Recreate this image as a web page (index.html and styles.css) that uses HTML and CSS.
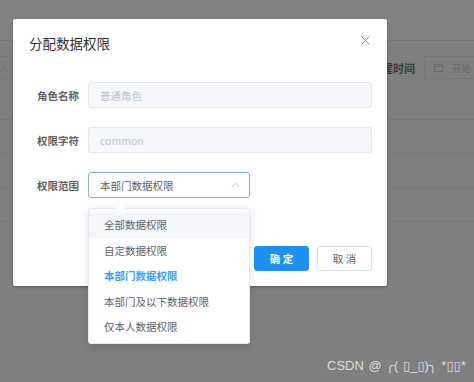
FILE: index.html
```html
<!DOCTYPE html>
<html lang="zh">
<head>
<meta charset="utf-8">
<title>分配数据权限</title>
<link rel="stylesheet" href="styles.css">
</head>
<body>
<div class="page">
  <div class="topbar"></div>
  <div class="filters">
    <div class="bg-input"><span>入</span></div>
    <div class="bg-label">创建时间</div>
    <div class="bg-date">
      <svg width="9" height="9" viewBox="0 0 9 9"><rect x="0.5" y="1.5" width="8" height="7" fill="none" stroke="#6a6a6a"/><line x1="0.5" y1="3.5" x2="8.5" y2="3.5" stroke="#6a6a6a"/></svg>
      <span>开始</span>
    </div>
  </div>
  <div class="rows">
    <div class="row-line"></div>
    <div class="row-line"></div>
    <div class="row-line"></div>
    <div class="row-line"></div>
  </div>
  <div class="watermark">CSDN @ ╭( ▯_▯)╮ *▯▯*</div>
</div>

<div class="dialog">
  <div class="dialog-header">
    <span class="dialog-title">分配数据权限</span>
    <svg class="close" width="9" height="9" viewBox="0 0 9 9"><path d="M0.5 0.5 L8.5 8.5 M8.5 0.5 L0.5 8.5" stroke="#909399" stroke-width="1" fill="none"/></svg>
  </div>
  <div class="dialog-body">
    <div class="form-row">
      <label class="form-label">角色名称</label>
      <div class="input disabled"><span class="placeholder">普通角色</span></div>
    </div>
    <div class="form-row">
      <label class="form-label">权限字符</label>
      <div class="input disabled"><span class="placeholder">common</span></div>
    </div>
    <div class="form-row">
      <label class="form-label">权限范围</label>
      <div class="input select focus">
        <span class="value">本部门数据权限</span>
        <svg class="arrow" width="9" height="6" viewBox="0 0 9 6"><polyline points="0.8,5 4.5,1.3 8.2,5" fill="none" stroke="#c0c4cc" stroke-width="1"/></svg>
      </div>
    </div>
  </div>
  <div class="dialog-footer">
    <button class="btn primary">确 定</button>
    <button class="btn">取 消</button>
  </div>
</div>

<div class="dropdown">
  <div class="popper-arrow"></div>
  <ul class="options">
    <li class="hover">全部数据权限</li>
    <li>自定数据权限</li>
    <li class="selected">本部门数据权限</li>
    <li>本部门及以下数据权限</li>
    <li>仅本人数据权限</li>
  </ul>
</div>
</body>
</html>
```

FILE: styles.css
```css
* { box-sizing: border-box; }
html, body {
  margin: 0;
  padding: 0;
}
body {
  width: 474px;
  height: 382px;
  overflow: hidden;
  background: #7f7f7f;
  font-family: "Noto Sans CJK SC", "Noto Sans", sans-serif;
  position: relative;
}
.page {
  width: 474px;
  height: 382px;
  overflow: hidden;
  position: relative;
  display: flex;
  flex-direction: column;
}
.topbar {
  height: 41px;
  flex-shrink: 0;
  background: #828282;
  border-bottom: 1px solid #767676;
}
.filters {
  display: flex;
  align-items: center;
  margin-top: 15px;
  height: 23px;
  flex-shrink: 0;
}
.bg-input {
  flex-shrink: 0;
  margin-left: -50px;
  width: 63px;
  height: 23px;
  border: 1px solid #777;
  display: flex;
  align-items: center;
  justify-content: flex-end;
  font-size: 9px;
  color: #6f6f6f;
  padding-right: 4px;
  overflow: hidden;
}
.bg-label {
  flex-shrink: 0;
  margin-left: 358px;
  width: 44px;
  font-size: 11px;
  font-weight: bold;
  color: #3a3a3a;
  text-align: right;
  white-space: nowrap;
}
.bg-date {
  flex-shrink: 0;
  margin-left: 9px;
  width: 70px;
  height: 23px;
  border: 1px solid #777;
  border-radius: 2px;
  display: flex;
  align-items: center;
  gap: 9px;
  padding-left: 9px;
  font-size: 9.5px;
  color: #6c6c6c;
  white-space: nowrap;
}
.rows {
  display: flex;
  flex-direction: column;
  margin-top: 40px;
}
.row-line {
  height: 34px;
  border-bottom: 1px solid #777;
}
.row-line:first-child { height: 1px; }
.watermark {
  position: absolute;
  left: 327px;
  top: 358px;
  font-family: "Liberation Sans", "DejaVu Sans", sans-serif;
  font-size: 13px;
  color: #dcdcdc;
  white-space: nowrap;
  word-spacing: 1px;
}

/* dialog */
.dialog {
  position: absolute;
  left: 13px;
  top: 19px;
  width: 374px;
  height: 267px;
  background: #fff;
  border-radius: 2px;
  box-shadow: 0 1px 3px rgba(0,0,0,0.3);
  display: flex;
  flex-direction: column;
}
.dialog-header {
  display: flex;
  align-items: center;
  justify-content: space-between;
  padding: 12px 17px 0 16px;
  height: 35px;
}
.dialog-title {
  font-size: 13.5px;
  color: #303133;
  line-height: 20px;
}
.close { display: block; margin-top: -4px; }
.dialog-body {
  display: flex;
  flex-direction: column;
  gap: 19px;
  padding-top: 28px;
}
.form-row {
  display: flex;
  align-items: center;
}
.form-label {
  width: 66px;
  margin-right: 9px;
  text-align: right;
  font-size: 10.5px;
  font-weight: bold;
  color: #606266;
}
.input {
  width: 284px;
  height: 26px;
  border: 1px solid #e4e7ed;
  border-radius: 3px;
  display: flex;
  align-items: center;
  padding-left: 11px;
  font-size: 10.5px;
}
.input.disabled { background: #f5f7fa; }
.placeholder { color: #c0c4cc; }
.select {
  width: 162px;
  justify-content: space-between;
  padding-right: 9px;
  background: #fff;
}
.select.focus { border-color: #86b3c2; }
.select .value { color: #606266; }
.arrow { display: block; }
.dialog-footer {
  margin-top: auto;
  display: flex;
  justify-content: flex-end;
  gap: 8px;
  padding: 0 15px 15px 0;
}
.btn {
  width: 55px;
  height: 25px;
  border: 1px solid #dcdfe6;
  background: #fff;
  border-radius: 3px;
  font-family: "Noto Sans CJK SC", sans-serif;
  font-size: 10.5px;
  color: #606266;
  padding: 0;
}
.btn.primary {
  background: #1f8ff0;
  border-color: #1f8ff0;
  color: #fff;
  font-weight: bold;
}

/* dropdown */
.dropdown {
  position: absolute;
  left: 88px;
  top: 208px;
  width: 162px;
  height: 136px;
  background: #fff;
  border: 1px solid #e4e7ed;
  border-radius: 3px;
  box-shadow: 0 2px 8px rgba(0,0,0,0.12);
}
.popper-arrow {
  position: absolute;
  left: 27px;
  top: -5px;
  width: 0;
  height: 0;
  border-left: 5px solid transparent;
  border-right: 5px solid transparent;
  border-bottom: 5px solid #fff;
}
.options {
  list-style: none;
  margin: 0;
  padding: 3px 0;
}
.options li {
  height: 25.5px;
  line-height: 25.5px;
  padding-left: 15px;
  font-size: 10.5px;
  color: #606266;
  white-space: nowrap;
}
.options li.hover { background: #f5f7fa; }
.options li.selected { color: #409eff; font-weight: bold; }
```
